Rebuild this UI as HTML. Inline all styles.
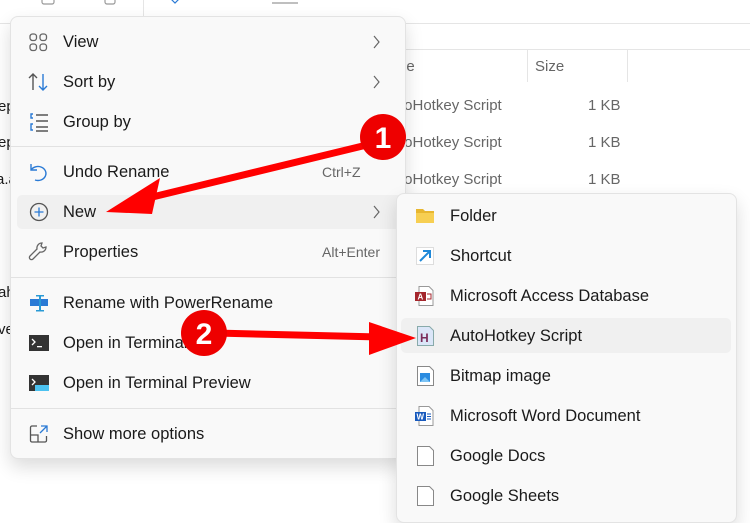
<!DOCTYPE html>
<html><head><meta charset="utf-8"><style>
*{margin:0;padding:0;box-sizing:border-box}
body{width:750px;height:500px;overflow:hidden;background:#fff;font-family:"Segoe UI","Liberation Sans",sans-serif;color:#1a1a1a;position:relative}
.t{position:absolute;font-size:16.5px;white-space:nowrap;line-height:20px}
.g{color:#666}
.menu{position:absolute;background:#f9f9f9;border:1px solid #e3e3e3;border-radius:8px;box-shadow:0 8px 18px rgba(0,0,0,.14)}
.sep{position:absolute;height:1px;background:#e2e2e2}
.hl{position:absolute;background:#f0f0f0;border-radius:5px}
.sc{position:absolute;font-size:14px;color:#666}
svg{position:absolute}
</style></head><body>
<!-- background explorer -->
<svg style="left:40px;top:0" width="340" height="10" fill="none" stroke="#999" stroke-width="1.2"><rect x="2" y="-6" width="12" height="10" rx="2"/><rect x="65" y="-6" width="10" height="10" rx="2"/><path d="M130 -2l5 5 5-5" stroke="#2a7ad5"/><path d="M232 3h26"/></svg>
<div style="position:absolute;left:143px;top:0;width:1px;height:16px;background:#e5e5e5"></div>
<div style="position:absolute;left:0;top:23px;width:750px;height:1px;background:#e5e5e5"></div>
<div style="position:absolute;left:400px;top:49px;width:350px;height:1px;background:#e5e5e5"></div>
<div style="position:absolute;left:527px;top:50px;width:1px;height:32px;background:#e5e5e5"></div>
<div style="position:absolute;left:627px;top:50px;width:1px;height:32px;background:#e5e5e5"></div>
<div class="t g" style="left:535px;top:57px;font-size:15px">Size</div>
<div class="t g" style="left:398px;top:57px;font-size:15px">pe</div>
<div class="t g" style="left:400px;top:96px;font-size:15px">toHotkey Script</div>
<div class="t g" style="left:400px;top:133px;font-size:15px">toHotkey Script</div>
<div class="t g" style="left:400px;top:170px;font-size:15px">toHotkey Script</div>
<div class="t g" style="left:588px;top:96px;font-size:15px">1 KB</div>
<div class="t g" style="left:588px;top:133px;font-size:15px">1 KB</div>
<div class="t g" style="left:588px;top:170px;font-size:15px">1 KB</div>
<div class="t" style="left:-2px;top:97px;font-size:15px">ep</div>
<div class="t" style="left:-2px;top:133px;font-size:15px">ep</div>
<div class="t" style="left:-4px;top:170px;font-size:15px">a.a</div>
<div class="t" style="left:-2px;top:283px;font-size:15px">ah</div>
<div class="t" style="left:-2px;top:320px;font-size:15px">ve</div>

<!-- main menu -->
<div class="menu" style="left:10px;top:16px;width:396px;height:443px"></div>
<div class="hl" style="left:17px;top:195px;width:395px;height:34px"></div>
<div class="sep" style="left:11px;top:146px;width:394px"></div>
<div class="sep" style="left:11px;top:277px;width:394px"></div>
<div class="sep" style="left:11px;top:408px;width:394px"></div>

<svg style="left:372px;top:34px" width="10" height="16" fill="none" stroke="#666" stroke-width="1.2"><path d="M2 2l5 6-5 6"/></svg>
<svg style="left:372px;top:74px" width="10" height="16" fill="none" stroke="#666" stroke-width="1.2"><path d="M2 2l5 6-5 6"/></svg>
<svg style="left:372px;top:204px" width="10" height="16" fill="none" stroke="#666" stroke-width="1.2"><path d="M2 2l5 6-5 6"/></svg>

<svg style="left:29px;top:33px" width="20" height="20" fill="none" stroke="#666" stroke-width="1.3"><rect x="1" y="1" width="6.5" height="6.5" rx="2.5"/><rect x="11" y="1" width="6.5" height="6.5" rx="2.5"/><rect x="1" y="11" width="6.5" height="6.5" rx="2.5"/><rect x="11" y="11" width="6.5" height="6.5" rx="2.5"/></svg>
<div class="t" style="left:63px;top:32px">View</div>
<svg style="left:28px;top:72px" width="22" height="20" fill="none" stroke-width="1.4"><path d="M5 18V2M1 6l4-4 4 4" stroke="#555"/><path d="M15 2v16M11 14l4 4 4-4" stroke="#2a7ad5"/></svg>
<div class="t" style="left:63px;top:72px">Sort by</div>
<svg style="left:29px;top:112px" width="20" height="20" fill="none" stroke-width="1.4"><path d="M7 3h12M7 9h12M7 15h12M7 19h12" stroke="#555"/><path d="M4 2H2v4h2M4 12H2v6h2" stroke="#2a7ad5"/></svg>
<div class="t" style="left:63px;top:112px">Group by</div>
<svg style="left:29px;top:162px" width="20" height="20" fill="none" stroke="#2a7ad5" stroke-width="1.4"><path d="M2 2v6h6"/><path d="M2 8a8 7 0 1 1 4 10"/></svg>
<div class="t" style="left:63px;top:162px">Undo Rename</div><div class="sc" style="left:322px;top:164px">Ctrl+Z</div>
<svg style="left:29px;top:202px" width="20" height="20" fill="none" stroke-width="1.3"><circle cx="10" cy="10" r="8.5" stroke="#555"/><path d="M10 5.5v9M5.5 10h9" stroke="#2a7ad5"/></svg>
<div class="t" style="left:63px;top:202px">New</div>
<svg style="left:28px;top:241px" width="22" height="22" fill="none" stroke="#666" stroke-width="1.3"><path d="M14 2a5 5 0 0 0-5 6L2 15a2 2 0 0 0 3 3l7-7a5 5 0 0 0 6-5l-3 1-2-2z"/></svg>
<div class="t" style="left:63px;top:242px">Properties</div><div class="sc" style="left:322px;top:244px">Alt+Enter</div>
<svg style="left:28px;top:293px" width="22" height="20"><rect x="2" y="6" width="18" height="7" fill="#2a7ad5"/><rect x="11" y="2" width="2" height="16" fill="#2a9ad5"/><rect x="8" y="2" width="8" height="1.5" fill="#2a9ad5"/><rect x="8" y="17" width="8" height="1.5" fill="#2a9ad5"/></svg>
<div class="t" style="left:63px;top:293px">Rename with PowerRename</div>
<svg style="left:28px;top:334px" width="22" height="18"><rect x="1" y="1" width="20" height="16" fill="#333"/><path d="M4 5l3 3-3 3" stroke="#fff" stroke-width="1.3" fill="none"/><rect x="9" y="12" width="5" height="1.3" fill="#fff"/></svg>
<div class="t" style="left:63px;top:333px">Open in Terminal</div>
<svg style="left:28px;top:374px" width="22" height="18"><rect x="1" y="1" width="20" height="16" fill="#333"/><rect x="7" y="11" width="14" height="6" fill="#4cc2f0"/><path d="M4 5l3 3-3 3" stroke="#fff" stroke-width="1.3" fill="none"/></svg>
<div class="t" style="left:63px;top:373px">Open in Terminal Preview</div>
<svg style="left:29px;top:424px" width="20" height="20" fill="none" stroke-width="1.3"><path d="M8 2H3a1.5 1.5 0 0 0-1.5 1.5v13A1.5 1.5 0 0 0 3 18h13a1.5 1.5 0 0 0 1.5-1.5V12M1.5 11H9v7" stroke="#555"/><path d="M12 2h6v6M18 2l-7 7" stroke="#2a7ad5"/></svg>
<div class="t" style="left:63px;top:424px">Show more options</div>

<!-- submenu -->
<div class="menu" style="left:396px;top:193px;width:341px;height:330px"></div>
<div class="hl" style="left:401px;top:318px;width:330px;height:35px"></div>
<svg style="left:416px;top:207px" width="20" height="18"><path d="M0 2h7l2 2h9v12H0z" fill="#e8b730"/><rect x="0" y="6" width="18" height="10" fill="#f7cf52"/></svg>
<div class="t" style="left:450px;top:206px">Folder</div>
<svg style="left:416px;top:247px" width="18" height="18"><rect x="0.5" y="0.5" width="17" height="17" fill="#fff" stroke="#ddd"/><path d="M4 14L13 5M7 4h7v7" stroke="#1e88d8" stroke-width="2" fill="none"/></svg>
<div class="t" style="left:450px;top:246px">Shortcut</div>
<svg style="left:415px;top:286px" width="20" height="20"><path d="M4 .5h10l4 4v15H4z" fill="#fff" stroke="#999"/><rect x="0" y="6" width="11" height="9" fill="#a4262c"/><text x="2.5" y="13.5" font-size="8" fill="#fff" font-family="Liberation Sans" font-weight="bold">A</text><path d="M12 8h4v5h-4" stroke="#a4262c" fill="none"/></svg>
<div class="t" style="left:450px;top:286px">Microsoft Access Database</div>
<svg style="left:417px;top:326px" width="18" height="20"><path d="M.5 .5h12l4 4v15H.5z" fill="#dbe6f8" stroke="#8aa"/><text x="3" y="16" font-size="12" fill="#7a2c5a" font-family="Liberation Sans" font-weight="bold">H</text></svg>
<div class="t" style="left:450px;top:326px">AutoHotkey Script</div>
<svg style="left:417px;top:366px" width="18" height="20"><path d="M.5 .5h12l4 4v15H.5z" fill="#fff" stroke="#888"/><rect x="3" y="7" width="10" height="9" fill="#2a8be0"/><path d="M3 16l5-5 5 5z" fill="#7cc4f5"/></svg>
<div class="t" style="left:450px;top:366px">Bitmap image</div>
<svg style="left:415px;top:406px" width="20" height="20"><path d="M4 .5h10l4 4v15H4z" fill="#fff" stroke="#999"/><rect x="0" y="6" width="11" height="9" fill="#185abd"/><text x="1.5" y="13.5" font-size="8" fill="#fff" font-family="Liberation Sans" font-weight="bold">W</text><path d="M12 8h4M12 10.5h4M12 13h4" stroke="#185abd"/></svg>
<div class="t" style="left:450px;top:406px">Microsoft Word Document</div>
<svg style="left:417px;top:446px" width="18" height="20"><path d="M.5 .5h12l4 4v15H.5z" fill="#fff" stroke="#888"/></svg>
<div class="t" style="left:450px;top:446px">Google Docs</div>
<svg style="left:417px;top:486px" width="18" height="20"><path d="M.5 .5h12l4 4v15H.5z" fill="#fff" stroke="#888"/></svg>
<div class="t" style="left:450px;top:486px">Google Sheets</div>

<!-- annotations -->
<svg style="left:0;top:0" width="750" height="500">
<path d="M375 143L140 200" stroke="#f00" stroke-width="7" fill="none"/>
<path d="M106 212L160 178L152 214z" fill="#f00"/>
<circle cx="383" cy="137" r="23" fill="#e00"/>
<text x="383" y="148" font-size="30" font-weight="bold" fill="#fff" text-anchor="middle" font-family="Liberation Sans">1</text>
<path d="M215 333L380 337" stroke="#f00" stroke-width="7" fill="none"/>
<path d="M416 338L369 322L369 355z" fill="#f00"/>
<circle cx="204" cy="333" r="23" fill="#e00"/>
<text x="204" y="344" font-size="30" font-weight="bold" fill="#fff" text-anchor="middle" font-family="Liberation Sans">2</text>
</svg>
</body></html>
